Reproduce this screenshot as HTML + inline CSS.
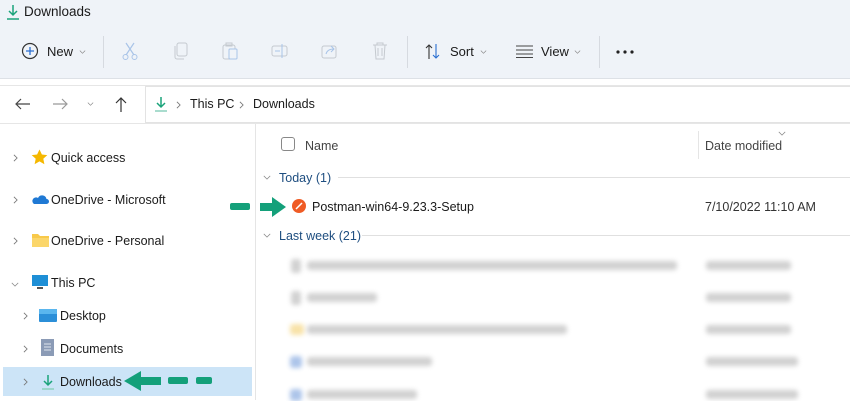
<!DOCTYPE html>
<html><head><style>
*{margin:0;padding:0;box-sizing:border-box}
body{width:850px;height:400px;overflow:hidden;background:#fff;font-family:"Segoe UI","Liberation Sans",sans-serif;font-size:12.5px;color:#1a1a1a;position:relative}
.a{position:absolute;white-space:nowrap}
.g{color:#9aa0a6}
.blur{filter:blur(2.5px);background:#9a9a9a;height:9px;border-radius:3px;position:absolute;opacity:.45}
</style></head><body>
<svg width="0" height="0" style="position:absolute"><defs>
<symbol id="dn" viewBox="0 0 10 6"><path d="M1 1l4 4 4-4" stroke="#888" stroke-width="1" fill="none"/></symbol>
<symbol id="rt" viewBox="0 0 6 10"><path d="M1 1l4 4-4 4" stroke="#777" stroke-width="1.1" fill="none"/></symbol>
</defs></svg>
<div class="a" style="left:0;top:0;width:850px;height:79px;background:#eff3f8;border-bottom:1px solid #dde1e6"></div>
<svg class="a" style="left:6px;top:4px" width="14" height="16" viewBox="0 0 14 16"><path d="M7 1v10M3 7l4 4 4-4" stroke="#1aa37a" stroke-width="1.5" fill="none"/><path d="M1 15h12" stroke="#1aa37a" stroke-width="1.5"/></svg>
<div class="a" style="left:24px;top:4px;font-size:13.5px">Downloads</div>
<svg class="a" style="left:21px;top:42px" width="18" height="18"><circle cx="9" cy="9" r="7.5" stroke="#333" stroke-width="1.2" fill="none"/><path d="M9 5v8M5 9h8" stroke="#2a6fd1" stroke-width="1.3"/></svg>
<div class="a" style="left:47px;top:44px;font-size:13px">New</div>
<svg class="a" style="left:79px;top:50px" width="7" height="4"><use href="#dn"/></svg>
<div class="a" style="left:103px;top:36px;width:1px;height:32px;background:#d6dae0"></div>
<svg class="a" style="left:122px;top:42px" width="16" height="19"><path d="M4 1l8 12M12 1L4 13" stroke="#a9c4e8" stroke-width="1.2"/><circle cx="3.5" cy="15" r="2.5" stroke="#a9c4e8" fill="none"/><circle cx="12.5" cy="15" r="2.5" stroke="#a9c4e8" fill="none"/></svg>
<svg class="a" style="left:174px;top:42px" width="14" height="18"><rect x="3" y="1" width="10" height="13" rx="2" stroke="#c4c9cf" fill="none"/><path d="M1 4v11a2 2 0 0 0 2 2h7" stroke="#c4c9cf" fill="none"/></svg>
<svg class="a" style="left:222px;top:42px" width="18" height="18"><rect x="1" y="3" width="12" height="14" rx="2" stroke="#c4c9cf" fill="none"/><rect x="4" y="1" width="6" height="3" stroke="#c4c9cf" fill="none"/><rect x="7" y="7" width="8" height="10" rx="1" stroke="#a9c4e8" fill="#eff3f8"/></svg>
<svg class="a" style="left:271px;top:44px" width="18" height="14"><rect x="1" y="2" width="15" height="10" rx="2" stroke="#c4c9cf" fill="none"/><path d="M4 7h5M11 0v14" stroke="#a9c4e8"/></svg>
<svg class="a" style="left:321px;top:43px" width="18" height="16"><rect x="1" y="3" width="14" height="12" rx="2" stroke="#c4c9cf" fill="none"/><path d="M5 11c1-4 4-5 8-5M10 3l3 3-3 3" stroke="#a9c4e8" fill="none"/></svg>
<svg class="a" style="left:372px;top:42px" width="16" height="18"><path d="M1 3h14M5 3V1h6v2M3 3l1 14h8l1-14M6 6v8M10 6v8" stroke="#c4c9cf" fill="none"/></svg>
<div class="a" style="left:407px;top:36px;width:1px;height:32px;background:#d6dae0"></div>
<svg class="a" style="left:425px;top:43px" width="16" height="17"><path d="M4 16V2M1 5l3-3 3 3" stroke="#333" stroke-width="1.1" fill="none"/><path d="M11 1v14M8 12l3 3 3-3" stroke="#2a6fd1" stroke-width="1.1" fill="none"/></svg>
<div class="a" style="left:450px;top:44px;font-size:13px">Sort</div>
<svg class="a" style="left:480px;top:50px" width="7" height="4"><use href="#dn"/></svg>
<svg class="a" style="left:516px;top:45px" width="18" height="13"><path d="M0 1h17M0 5h17M0 9h17M0 12.5h17" stroke="#444" stroke-width="1"/></svg>
<div class="a" style="left:541px;top:44px;font-size:13px">View</div>
<svg class="a" style="left:574px;top:50px" width="7" height="4"><use href="#dn"/></svg>
<div class="a" style="left:599px;top:36px;width:1px;height:32px;background:#d6dae0"></div>
<svg class="a" style="left:616px;top:50px" width="20" height="4"><circle cx="2" cy="2" r="1.6" fill="#222"/><circle cx="9" cy="2" r="1.6" fill="#222"/><circle cx="16" cy="2" r="1.6" fill="#222"/></svg>
<div class="a" style="left:0;top:85px;width:850px;height:1px;background:#e6e6e6"></div>
<div class="a" style="left:145px;top:86px;width:705px;height:37px;border:1px solid #e3e3e3;border-right:none"></div>
<svg class="a" style="left:15px;top:98px" width="16" height="12"><path d="M15 6H2M6 1L1 6l5 5" stroke="#444" stroke-width="1.2" fill="none"/></svg>
<svg class="a" style="left:52px;top:98px" width="16" height="12"><path d="M1 6h13M10 1l5 5-5 5" stroke="#999" stroke-width="1.2" fill="none"/></svg>
<svg class="a" style="left:87px;top:102px" width="7" height="4"><use href="#dn"/></svg>
<svg class="a" style="left:115px;top:96px" width="12" height="16"><path d="M6 16V2M1 7l5-5 5 5" stroke="#333" stroke-width="1.2" fill="none"/></svg>
<svg class="a" style="left:154px;top:96px" width="14" height="16"><path d="M7 1v10M3 7l4 4 4-4" stroke="#1aa37a" stroke-width="1.5" fill="none"/><path d="M1 15h12" stroke="#8cd1bd" stroke-width="1.5"/></svg>
<svg class="a" style="left:176px;top:101px" width="5" height="8"><use href="#rt"/></svg>
<div class="a" style="left:190px;top:97px">This PC</div>
<svg class="a" style="left:239px;top:101px" width="5" height="8"><use href="#rt"/></svg>
<div class="a" style="left:253px;top:97px">Downloads</div>
<div class="a" style="left:0;top:123px;width:850px;height:1px;background:#e6e6e6"></div>
<div class="a" style="left:255px;top:124px;width:1px;height:276px;background:#e5e5e5"></div>
<!-- left nav -->
<svg class="a" style="left:13px;top:154px" width="5" height="8"><use href="#rt"/></svg>
<svg class="a" style="left:31px;top:149px" width="17" height="16"><path d="M8.5 0.5l2.4 5 5.4.6-4 3.7 1.1 5.4-4.9-2.8-4.9 2.8 1.1-5.4-4-3.7 5.4-.6z" fill="#f5b800"/></svg>
<div class="a" style="left:51px;top:151px">Quick access</div>
<svg class="a" style="left:13px;top:196px" width="5" height="8"><use href="#rt"/></svg>
<svg class="a" style="left:31px;top:193px" width="18" height="12"><path d="M3 11h12.5a2.5 2.5 0 0 0 0-5 4.5 4.5 0 0 0-8.5-1 3 3 0 0 0-4 6z" fill="#1f79d4"/></svg>
<div class="a" style="left:51px;top:193px">OneDrive - Microsoft</div>
<svg class="a" style="left:13px;top:237px" width="5" height="8"><use href="#rt"/></svg>
<svg class="a" style="left:32px;top:233px" width="17" height="14"><path d="M0 1h6l2 2h9v11H0z" fill="#f8c94a"/><path d="M0 5h17v9H0z" fill="#fbd66a"/></svg>
<div class="a" style="left:51px;top:234px">OneDrive - Personal</div>
<svg class="a" style="left:11px;top:282px" width="8" height="5"><use href="#dn"/></svg>
<svg class="a" style="left:31px;top:275px" width="18" height="15"><rect x="1" y="0" width="16" height="11" fill="#1e8fd6"/><rect x="6" y="12" width="6" height="2" fill="#555"/></svg>
<div class="a" style="left:51px;top:276px">This PC</div>
<svg class="a" style="left:23px;top:312px" width="5" height="8"><use href="#rt"/></svg>
<svg class="a" style="left:39px;top:309px" width="18" height="13"><rect x="0" y="0" width="18" height="13" rx="1" fill="#2b8fd8"/><rect x="0" y="0" width="18" height="5" fill="#5ab6ee"/></svg>
<div class="a" style="left:60px;top:309px">Desktop</div>
<svg class="a" style="left:23px;top:345px" width="5" height="8"><use href="#rt"/></svg>
<svg class="a" style="left:41px;top:339px" width="13" height="17"><rect x="0" y="0" width="13" height="17" fill="#8b9bb6"/><path d="M3 5h7M3 8h7M3 11h7" stroke="#dfe5ee"/></svg>
<div class="a" style="left:60px;top:342px">Documents</div>
<div class="a" style="left:3px;top:367px;width:249px;height:29px;background:#cce4f7"></div>
<svg class="a" style="left:23px;top:378px" width="5" height="8"><use href="#rt"/></svg>
<svg class="a" style="left:41px;top:374px" width="14" height="16"><path d="M7 1v10M3 7l4 4 4-4" stroke="#1aa37a" stroke-width="1.5" fill="none"/><path d="M1 15h12" stroke="#8cd1bd" stroke-width="1.5"/></svg>
<div class="a" style="left:60px;top:375px">Downloads</div>
<svg class="a" style="left:122px;top:368px" width="95" height="26"><path d="M2 13l17-10v6h20v8H19v6z" fill="#14a07a"/><rect x="46" y="9" width="20" height="7" rx="2" fill="#14a07a"/><rect x="74" y="9" width="16" height="7" rx="2" fill="#14a07a"/></svg>
<!-- right pane -->
<div class="a" style="left:281px;top:137px;width:14px;height:14px;border:1px solid #888;border-radius:3px"></div>
<div class="a" style="left:305px;top:139px;color:#444">Name</div>
<div class="a" style="left:698px;top:131px;width:1px;height:28px;background:#e5e5e5"></div>
<svg class="a" style="left:778px;top:131px" width="8" height="5"><use href="#dn"/></svg>
<div class="a" style="left:705px;top:139px;color:#444">Date modified</div>
<svg class="a" style="left:263px;top:175px" width="8" height="5"><use href="#dn"/></svg>
<div class="a" style="left:279px;top:171px;color:#1e4e80">Today (1)</div>
<div class="a" style="left:338px;top:177px;width:512px;height:1px;background:#e0e0e0"></div>
<svg class="a" style="left:230px;top:196px" width="60" height="24"><rect x="0" y="7" width="20" height="7" rx="2" fill="#14a07a"/><path d="M30 7h12V1l14 10-14 10v-6H30z" fill="#14a07a"/></svg>
<svg class="a" style="left:292px;top:199px" width="14" height="14"><circle cx="7" cy="7" r="7" fill="#ef5b25"/><path d="M4 10l6-6" stroke="#fff" stroke-width="1.5"/></svg>
<div class="a" style="left:312px;top:200px">Postman-win64-9.23.3-Setup</div>
<div class="a" style="left:705px;top:200px;color:#333">7/10/2022 11:10 AM</div>
<svg class="a" style="left:263px;top:233px" width="8" height="5"><use href="#dn"/></svg>
<div class="a" style="left:279px;top:229px;color:#1e4e80">Last week (21)</div>
<div class="a" style="left:362px;top:235px;width:488px;height:1px;background:#e0e0e0"></div>
<div class="blur" style="left:291px;top:259px;width:10px;height:14px"></div>
<div class="blur" style="left:307px;top:261px;width:370px"></div>
<div class="blur" style="left:706px;top:261px;width:85px"></div>
<div class="blur" style="left:291px;top:291px;width:10px;height:14px"></div>
<div class="blur" style="left:307px;top:293px;width:70px"></div>
<div class="blur" style="left:706px;top:293px;width:85px"></div>
<div class="blur" style="left:290px;top:324px;width:14px;height:11px;background:#f0c040"></div>
<div class="blur" style="left:307px;top:325px;width:260px"></div>
<div class="blur" style="left:706px;top:325px;width:85px"></div>
<div class="blur" style="left:290px;top:356px;width:12px;height:12px;background:#4a7fd0"></div>
<div class="blur" style="left:307px;top:357px;width:125px"></div>
<div class="blur" style="left:706px;top:357px;width:92px"></div>
<div class="blur" style="left:290px;top:389px;width:12px;height:12px;background:#4a7fd0"></div>
<div class="blur" style="left:307px;top:390px;width:110px"></div>
<div class="blur" style="left:706px;top:390px;width:92px"></div>
</body></html>
